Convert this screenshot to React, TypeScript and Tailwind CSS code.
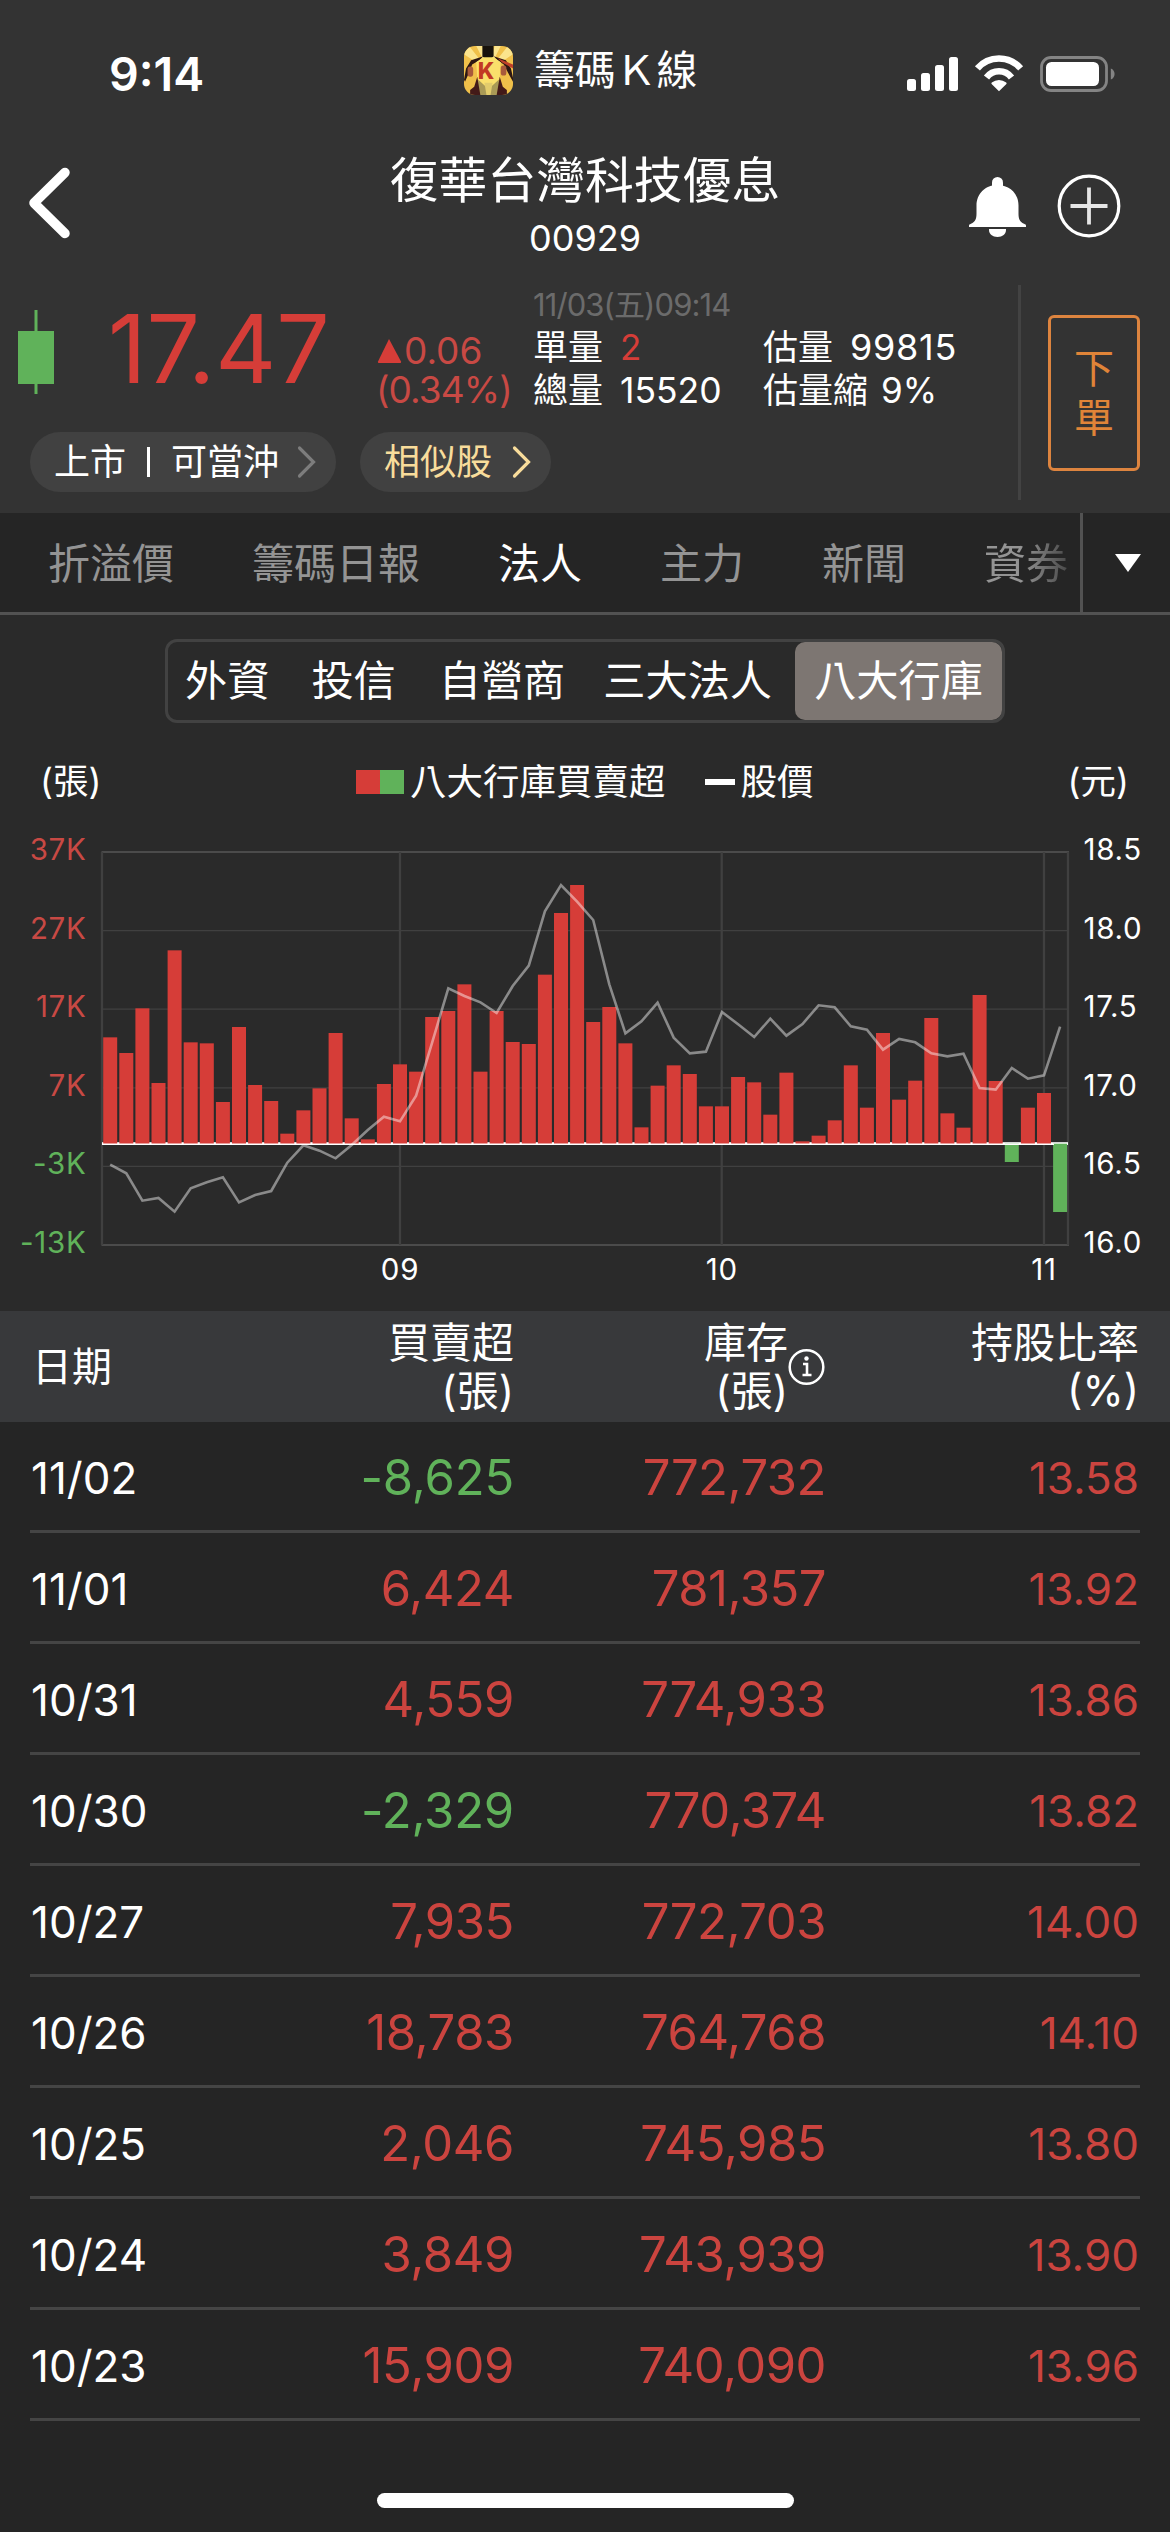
import React from "react";

type Day = { top: number; price: number };

const UP = "#d63d38";
const DOWN = "#60b25a";

const barEnds = [
  652, 699, 565, 789, 391, 667, 670, 846, 621, 795, 843, 941, 871, 805, 639, 895, 958, 792, 733, 755,
  591, 573, 493, 755, 573, 666, 672, 464, 279, 195, 606, 561, 670, 922, 797, 736, 762, 859, 859, 771,
  787, 884, 758, 964, 947, 901, 736, 863, 639, 839, 782, 594, 880, 923, 525, 783, 1026, 863, 819, 1176,
];
const priceEnds = [
  1034, 1060, 1142, 1134, 1175, 1105, 1087, 1072, 1147, 1125, 1113, 1028, 976, 992, 1015, 975, 930, 890, 904, 827,
  667, 505, 528, 547, 579, 498, 437, 274, 195, 245, 300, 493, 640, 604, 548, 653, 700, 695, 576, 613,
  651, 596, 647, 612, 556, 562, 619, 629, 689, 657, 667, 700, 709, 701, 804, 809, 744, 776, 766, 620,
];
const days: Day[] = barEnds.map((top, i) => ({ top: top / 3, price: priceEnds[i] / 3 }));
const ZERO = 323.7;
const cx = (i: number) => 110.2 + 16.1 * i;

const leftTicks = ["37K", "27K", "17K", "7K", "-3K", "-13K"];
const rightTicks = ["18.5", "18.0", "17.5", "17.0", "16.5", "16.0"];

function Chart() {
  return (
    <svg className="block" width={1170} height={491} viewBox="0 0 1170 491">
      {[0, 1, 2, 3, 4, 5].map((i) => (
        <line
          key={i}
          x1={101.5}
          x2={1069}
          y1={32 + i * 78.6}
          y2={32 + i * 78.6}
          stroke={i % 5 ? "#404040" : "#4b4b4b"}
          strokeWidth={i % 5 ? 1.3 : 2}
        />
      ))}
      {[102, 400, 721.7, 1044, 1068].map((x) => (
        <line key={x} x1={x} x2={x} y1={32} y2={425} stroke="#404040" strokeWidth={2.3} />
      ))}
      <rect x={102} y={322.2} width={966} height={2.8} fill="#fff" />
      {days.map((d, i) => {
        const up = d.top < ZERO;
        return (
          <rect
            key={i}
            x={cx(i) - 7}
            y={up ? d.top : ZERO}
            width={14}
            height={Math.abs(ZERO - d.top)}
            fill={up ? UP : DOWN}
          />
        );
      })}
      <rect x={102} y={323.7} width={952} height={1.3} fill="#fff" />
      <polyline
        points={days.map((d, i) => `${cx(i)},${d.price}`).join(" ")}
        fill="none"
        stroke="#fff"
        strokeOpacity={0.45}
        strokeWidth={2.6}
      />
      <g fontSize={29.5} letterSpacing={0.7}>
        {leftTicks.map((t, i) => (
          <text key={t} x={86.5} y={40 + i * 78.6} textAnchor="end" fill={i < 4 ? "#c84944" : DOWN}>
            {t}
          </text>
        ))}
        {rightTicks.map((t, i) => (
          <text key={t} x={1083.5} y={40 + i * 78.6} fill="#fff">
            {t}
          </text>
        ))}
        <g fill="#fff" textAnchor="middle">
          <text x={400} y={460}>09</text>
          <text x={721.7} y={460}>10</text>
          <text x={1044} y={460}>11</text>
        </g>
      </g>
    </svg>
  );
}

function AppBadge() {
  return (
    <svg width={49} height={49} viewBox="0 0 48 48" className="block overflow-hidden rounded-[11px]">
      <rect width={48} height={48} fill="#f0c04a" />
      <path d="M24 24 0 8V0h5ZM24 24 12 0h6ZM24 24 30 0h6ZM24 24 43 0h5v8Z" fill="#fbe48d" />
      <path d="M18 0h11v10l-3 3h-5l-3-3Z" fill="#17120c" />
      <path d="M2 22 7 14l12-4-4 4-7 4-3 8-4 9-1-2ZM46 22 41 14l-12-4 4 4 6 4 4 8 5 9v-4Z" fill="#2c1713" />
      <path d="m33 12 15 6v4l-11-6Z" fill="#bf4029" />
      <path d="M12 16 19 11h10l7 5-1 16-11 12-11-12Z" fill="#fae06b" />
      <path d="m14 33 10 9 10-9 1 15H13Z" fill="#a99a56" />
      <path d="M20 36h8l-2 12h-4Z" fill="#e2cc6c" />
      <path d="M6 48v-5l4-3 3-10 3 18ZM42 48v-5l-4-3-3-10-3 18Z" fill="#431a18" />
      <rect x={3.5} y={20} width={5.5} height={10} rx={2.5} fill="#a85a3b" />
      <rect x={36} y={19} width={5.5} height={10} rx={2.5} fill="#a85a3b" />
      <text x={21.5} y={32} textAnchor="middle" fontSize={22} fontWeight={800} fill="#c23a24">
        K
      </text>
    </svg>
  );
}

function StatusIcons() {
  return (
    <svg width={210} height={40} viewBox="906 54 210 40" className="block">
      <g fill="#fff">
        <rect x={907} y={79} width={9} height={12} rx={2.5} />
        <rect x={921} y={73} width={9} height={18} rx={2.5} />
        <rect x={935} y={65} width={9} height={26} rx={2.5} />
        <rect x={949} y={57} width={9} height={34} rx={2.5} />
        <path d="M999 91.300 991.600 84q-.6-.8.2-1.400a11.500 11.500 0 0 1 14.400 0q.8.6.2 1.400Z" />
      </g>
      <g fill="none" stroke="#fff" strokeWidth={6.6}>
        <path d="M986.500 77.400A15.800 15.800 0 0 1 1011.500 77.400" />
        <path d="M977.400 68.400A28.500 28.500 0 0 1 1020.600 68.400" />
      </g>
      <rect x={1041.500} y={57.500} width={65} height={33} rx={9.5} fill="none" stroke="#848484" strokeWidth={2.8} />
      <rect x={1046} y={62} width={53} height={24} rx={5.5} fill="#fff" />
      <path d="M1110.800 68.500c5 1.500 5 9.500 0 11Z" fill="#848484" />
    </svg>
  );
}

function Chevron({ className }: { className: string }) {
  return (
    <svg width={20} height={34} viewBox="0 0 20 34" className={className}>
      <path d="m2.500 3 14 14-14 14" fill="none" stroke="currentColor" strokeWidth={3.200} strokeLinecap="round" />
    </svg>
  );
}

const rows = [
  ["11/02", "-8,625", "772,732", "13.58"],
  ["11/01", "6,424", "781,357", "13.92"],
  ["10/31", "4,559", "774,933", "13.86"],
  ["10/30", "-2,329", "770,374", "13.82"],
  ["10/27", "7,935", "772,703", "14.00"],
  ["10/26", "18,783", "764,768", "14.10"],
  ["10/25", "2,046", "745,985", "13.80"],
  ["10/24", "3,849", "743,939", "13.90"],
  ["10/23", "15,909", "740,090", "13.96"],
];

function Header() {
  return (
    <header className="h-[513px] bg-[#333333]">
      <div className="grid h-[140px] grid-cols-[464px_442px_264px] items-start">
        <div className="pt-[49px] pl-[109px] text-[46.500px] leading-[50px] font-semibold">9:14</div>
        <div className="flex items-center pt-[46px]">
          <AppBadge />
          <span className="ml-[21px] text-[40.800px] leading-[49px]">籌碼Ｋ線</span>
        </div>
        <div className="pt-[54px]">
          <StatusIcons />
        </div>
      </div>

      <div className="grid h-[130px] grid-cols-[240px_1fr_240px]">
        <svg width={50} height={76} viewBox="0 0 50 76" className="mt-[25px] ml-[25px]">
          <path d="M40 7.500 9 38l31 30.500" fill="none" stroke="#fff" strokeWidth={9.5} strokeLinecap="round" strokeLinejoin="round" />
        </svg>
        <div className="text-center">
          <h1 className="pt-[11px] text-[48.800px] leading-[60px]">復華台灣科技優息</h1>
          <div className="pt-[7px] text-[36px] leading-[40px]">00929</div>
        </div>
        <div className="flex items-start pt-[34px] pl-[38px]">
          <svg width={59} height={64} viewBox="0 0 59 64">
            <g fill="#fff">
              <path d="M24 14V8.500a5.500 5.500 0 0 1 11 0V14Z" />
              <path d="M29.500 11c12 0 21 8.500 21 20.500v8c0 5 1 8.500 5.500 10.200 1.500.5 2 1 2 2v1.300H1v-1.300c0-1 .5-1.500 2-2 4.500-1.700 5.500-5.200 5.500-10.200v-8C8.500 19.500 17.500 11 29.500 11Z" />
              <path d="M21 55h17v1c0 4-3.500 7-8.500 7S21 60 21 56Z" />
            </g>
          </svg>
          <svg width={66} height={66} viewBox="0 0 66 66" className="ml-[29px]">
            <g fill="none" stroke="#fff" strokeWidth={3.200}>
              <circle cx={33} cy={32} r={29.800} />
              <path d="M14.500 32h37M33 13.500v37" stroke="#e6e6e6" strokeWidth={3.8} />
            </g>
          </svg>
        </div>
      </div>

      <div className="flex h-[243px] pt-[15px]">
        <div className="w-[1018px]">
          <div className="flex h-[128px]">
            <svg width={54} height={128} viewBox="0 0 54 128">
              <rect x={34.500} y={25} width={3} height={84} fill={DOWN} />
              <rect x={18} y={46} width={36} height={53} fill={DOWN} />
            </svg>
            <div className="w-[323px] pl-[54px] text-[94.500px] leading-[128px] text-[#d63d38]">17.47</div>
            <div className="w-[156px] pt-[46px] text-[37px] leading-[39px] text-[#c84944]">
              <div className="flex items-center">
                <svg width={26} height={26} viewBox="0 0 26 26" className="mr-[2px] -ml-[1px]">
                  <path d="M13 1 25 23.500q.5 1.500-1 1.500H3q-1.500 0-1-1.500Z" fill={UP} />
                </svg>
                0.06
              </div>
              <div className="-ml-[1px] tracking-[-0.9px]">(0.34%)</div>
            </div>
            <div className="text-[35px] leading-[43px]">
              <div className="text-[31px] leading-[40px] tracking-[-0.9px] text-[#6b6b6b]">11/03(五)09:14</div>
              <div className="grid grid-cols-[230px_1fr] pt-px">
                <div className="flex gap-[17px]">單量<span className="text-[#d63d38]">2</span></div>
                <div className="flex gap-[17px]">估量<span className="text-[36px] tracking-[0.7px]">99815</span></div>
                <div className="flex gap-[17px]">總量<span className="text-[35.500px]">15520</span></div>
                <div className="flex gap-[13px]">估量縮<span>9%</span></div>
              </div>
            </div>
          </div>
          <div className="mt-[19px] ml-[30px] flex gap-[24px] text-[36px] leading-[60px]">
            <div className="flex w-[306px] items-center rounded-full bg-[#414141] pl-[24px]">
              上市<span className="mx-[21px] h-[30px] w-[3px] bg-white" />可當沖
              <Chevron className="ml-auto mr-[19px] text-[#7d7d7d]" />
            </div>
            <div className="flex w-[191px] items-center rounded-full bg-[#414141] pl-[24px] text-[#f8dc9b]">
              相似股
              <Chevron className="ml-auto mr-[19px]" />
            </div>
          </div>
        </div>
        <div className="h-[215px] w-[3px] bg-[#434343]" />
        <div className="mt-[30px] ml-[27px] flex h-[156px] w-[92px] flex-col items-center justify-center rounded-[6px] border-3 border-[#dd843f] text-[40px] leading-[49px] text-[#e08438]">
          <span>下</span>
          <span>單</span>
        </div>
      </div>
    </header>
  );
}

export default function App() {
  return (
    <main className="h-[2532px] w-[1170px] overflow-hidden bg-[#252525] font-[Inter,'Noto_Sans_CJK_TC',sans-serif] text-white">
      <Header />

      <nav className="flex h-[102px] border-b-3 border-[#525252] text-[42px] leading-[102px] text-[#949494]">
        <div className="flex w-[1080px] gap-[78px] pl-[48px] whitespace-nowrap">
          <span>折溢價</span>
          <span>籌碼日報</span>
          <span className="text-white">法人</span>
          <span>主力</span>
          <span>新聞</span>
          <span className="bg-linear-to-r from-[#949494] from-45% to-[#4a4a4a] bg-clip-text text-transparent">資券</span>
        </div>
        <div className="flex flex-1 items-center justify-center border-l-3 border-[#525252]">
          <svg width={28} height={18} viewBox="0 0 28 18" className="ml-[3px]">
            <path d="M1 0h26L14 18Z" fill="#fff" />
          </svg>
        </div>
      </nav>

      <section className="h-[696px] bg-[#2a2a2a] pt-[24px]">
        <div className="mx-auto flex h-[84px] w-[840px] rounded-[12px] border-3 border-[#424242] text-[42.200px] leading-[78px]">
          <span className="pl-[17px]">外資</span>
          <span className="pl-[42px]">投信</span>
          <span className="pl-[43px]">自營商</span>
          <span className="pl-[38px]">三大法人</span>
          <span className="ml-auto w-[207px] rounded-[10px] bg-[#7d7672] text-center">八大行庫</span>
        </div>
        <div className="mt-[31px] flex h-[56px] items-center pl-[40px] pr-[41px] text-[36.500px] leading-[56px]">
          <span className="w-[316px] text-[35.500px]">(張)</span>
          <span className="h-[24px] w-[24px] bg-[#d63d38]" />
          <span className="mr-[6px] h-[24px] w-[24px] bg-[#60b25a]" />
          八大行庫買賣超
          <span className="mr-[6px] ml-[39px] h-[6px] w-[30px] bg-white" />
          股價
          <span className="ml-auto text-[35.500px]">(元)</span>
        </div>
        <div className="mt-[10px]">
          <Chart />
        </div>
      </section>

      <div className="grid h-[111px] grid-cols-[200px_314px_274px_38px_313px_31px] items-center bg-[#38393b] text-right text-[42px] leading-[48px]">
        <span className="pl-[32px] text-left text-[40px]">日期</span>
        <span>買賣超<br />(張)</span>
        <span>庫存<br />(張)</span>
        <svg width={38} height={38} viewBox="0 0 38 38">
          <circle cx={18.5} cy={19} r={16.800} fill="none" stroke="#fff" strokeWidth={2.500} />
          <circle cx={18.5} cy={10.500} r={2.200} fill="#fff" />
          <path d="M15 16h4v11m-4.500 0h9" fill="none" stroke="#fff" strokeWidth={2.600} />
        </svg>
        <span>持股比率<br />(%)</span>
      </div>

      <div className="mx-[30px]">
        {rows.map(([date, net, stock, ratio]) => (
          <div
            key={date}
            className="grid h-[111px] grid-cols-[170px_314px_312px_313px] items-center border-b-3 border-[#454545] pt-[4px] text-right text-[49px] text-[#cb443f]"
          >
            <span className="pl-px text-left text-[44px] text-white">{date}</span>
            <span className={net.startsWith("-") ? "tracking-[-0.2px] text-[#60b25a]" : "tracking-[-0.4px]"}>{net}</span>
            <span className="tracking-[-0.5px]">{stock}</span>
            <span className="text-[44px]">{ratio}</span>
          </div>
        ))}
      </div>
      <div className="mx-auto mt-[72px] h-[15px] w-[417px] rounded-full bg-white" />
    </main>
  );
}
